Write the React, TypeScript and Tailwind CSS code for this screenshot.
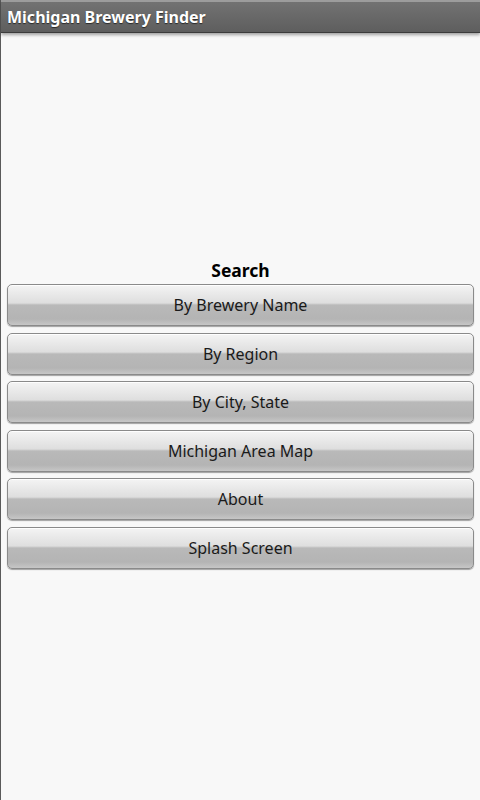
const buttons = ["By Brewery Name", "By Region", "By City, State", "Michigan Area Map", "About", "Splash Screen"];

function MenuButton({ label }: { label: string }) {
  return (
    <button
      type="button"
      className="flex h-[42px] w-full items-center justify-center rounded-[5px] border border-[#8a8a8a] bg-[linear-gradient(to_bottom,#f4f4f4_0%,#dedede_45%,#b9b9b9_50%,#b4b4b4_85%,#c6c6c6_100%)] text-[16px] text-[#1a1a1a] shadow-[0_1px_1px_rgba(0,0,0,0.35),inset_0_1px_0_rgba(255,255,255,0.9)]"
    >
      {label}
    </button>
  );
}

export default function App() {
  return (
    <div className="flex h-[800px] w-[480px] flex-col border-l border-[#5a5a5a] bg-[#f8f8f8] font-['Noto_Sans','Open_Sans',sans-serif]">
      <div className="relative flex h-[33px] shrink-0 items-center border-t-2 border-b border-t-[#9c9c9c] border-b-[#3c3c3c] bg-[linear-gradient(to_bottom,#727272,#5e5e5e)] px-[6px] shadow-[0_2px_3px_rgba(0,0,0,0.35)]">
        <h1 className="text-[16px] font-bold text-white [text-shadow:0_1px_1px_rgba(0,0,0,0.6)]">Michigan Brewery Finder</h1>
      </div>
      <div className="flex flex-1 flex-col justify-center px-[6px] pb-[6px]">
        <p className="mb-[2px] text-center text-[17.5px] font-bold leading-[24px] text-black">Search</p>
        <div className="flex flex-col gap-[6.6px]">
          {buttons.map((label) => (
            <MenuButton key={label} label={label} />
          ))}
        </div>
      </div>
    </div>
  );
}
